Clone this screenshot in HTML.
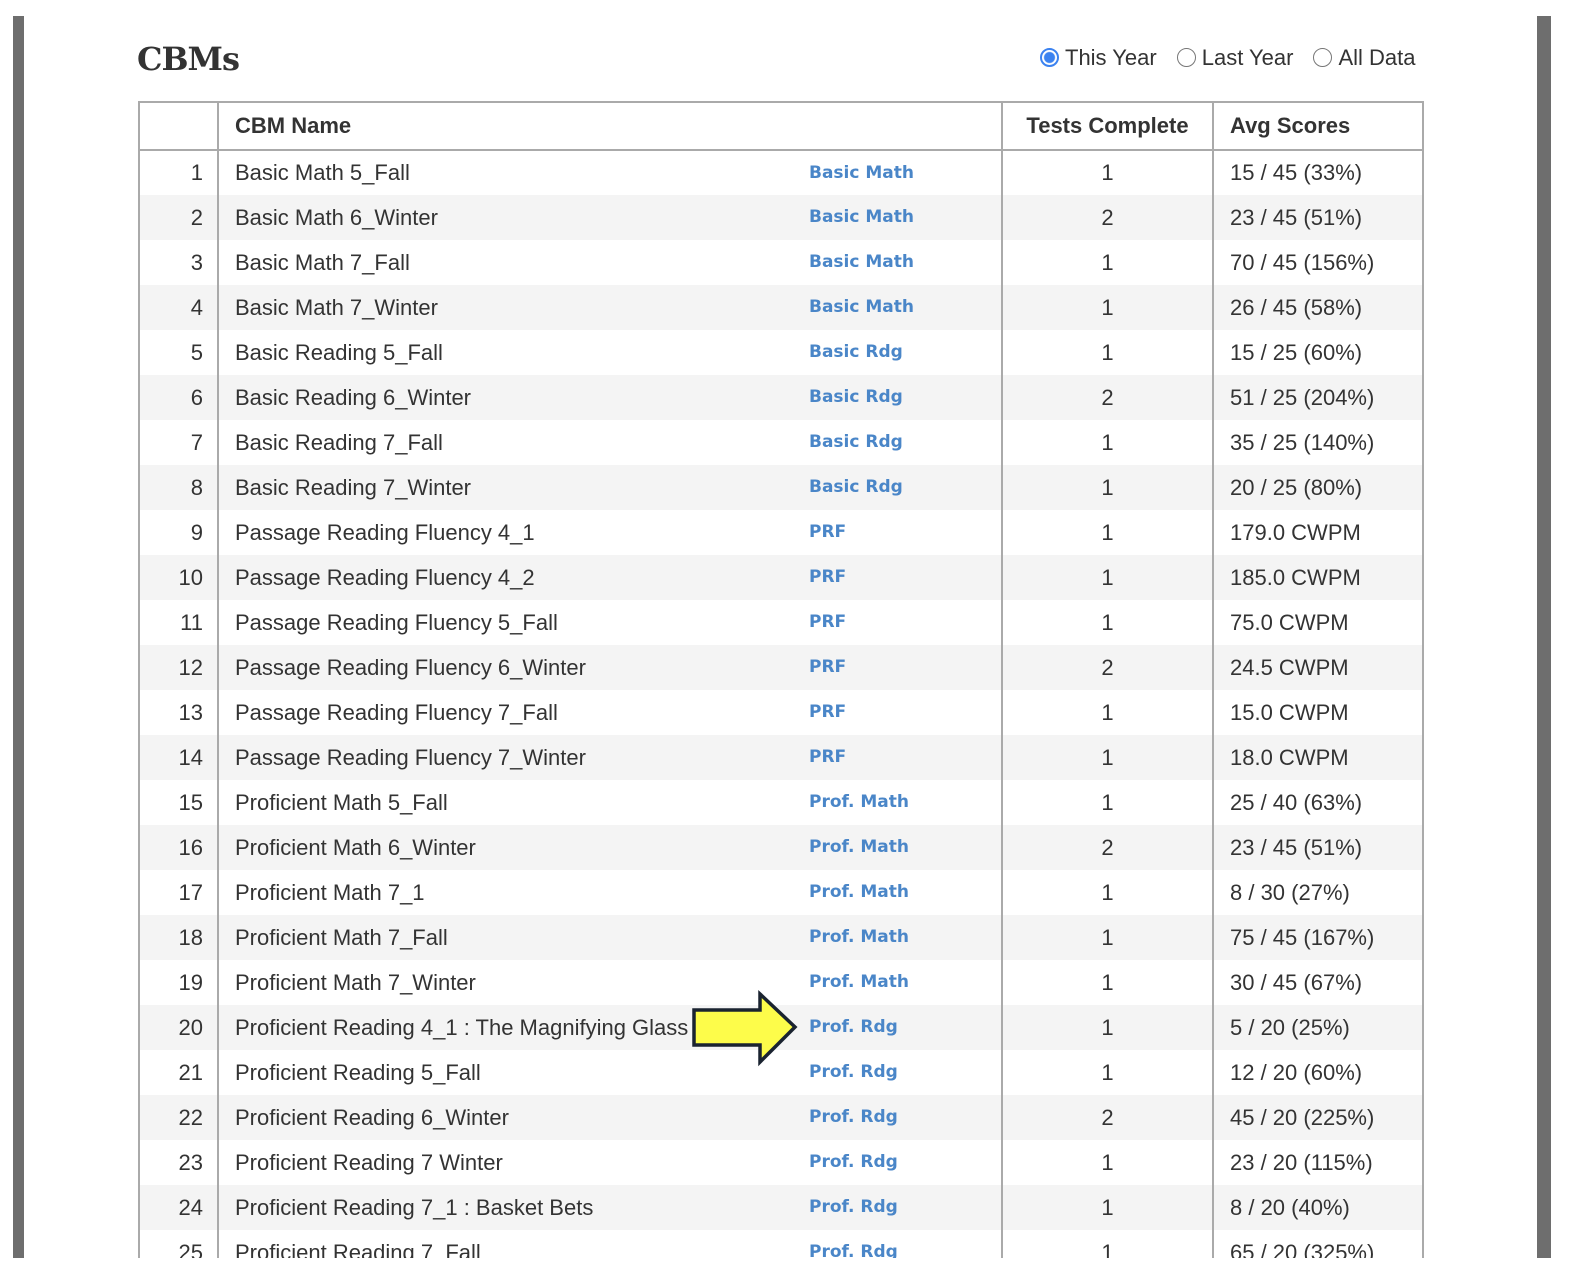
<!DOCTYPE html>
<html><head><meta charset="utf-8"><style>
*{margin:0;padding:0;box-sizing:border-box}
html,body{width:1580px;height:1288px;background:#fff;overflow:hidden}
.bar{position:absolute;top:16px;height:1242px;background:#6e6e6e}
.clip{position:absolute;left:0;top:0;width:1580px;height:1258px;overflow:hidden}
h1{position:absolute;left:137px;top:40px;font:bold 32px "DejaVu Serif","Liberation Serif",serif;color:#333;letter-spacing:-1px}
.radios{position:absolute;left:1040px;top:45px;font:22px "Liberation Sans",sans-serif;color:#333;white-space:nowrap}
.r{display:inline-block;width:19px;height:19px;border:1px solid #777;border-radius:50%;vertical-align:-2px;margin-right:6px;background:#fff}
.r.on{border:2px solid #3b82f0;background:radial-gradient(circle,#3b82f0 0 5px,#fff 6px)}
.radios span.l{margin-right:20px}
table{position:absolute;left:138px;top:101px;width:1286px;border-collapse:collapse;font:22px "Liberation Sans",sans-serif;color:#333}
th{height:48px;text-align:left;font-weight:bold;border:2px solid #aaa;padding-left:16px}
td{height:45px;border-left:2px solid #aaa;border-right:2px solid #aaa}
tr:nth-child(odd) td{background:#f4f4f4}
td.n{text-align:right;padding-right:14px;width:79px}
td.nm{padding-left:16px;width:784px;position:relative}
td.tc{text-align:center;width:211px}
td.av{padding-left:16px}
.tag{position:absolute;left:590px;top:12px;font:bold 17px "DejaVu Sans",Verdana,sans-serif;color:#4a86c8}
</style></head><body>
<div class="bar" style="left:13px;width:11px"></div>
<div class="bar" style="left:1537px;width:14px"></div>
<div class="clip">
<h1>CBMs</h1>
<div class="radios"><span class="r on"></span><span class="l">This Year</span><span class="r"></span><span class="l">Last Year</span><span class="r"></span>All Data</div>
<table>
<tr><th style="width:79px"></th><th>CBM Name</th><th style="text-align:center;padding:0">Tests Complete</th><th>Avg Scores</th></tr>
<tr><td class="n">1</td><td class="nm">Basic Math 5_Fall<span class="tag">Basic Math</span></td><td class="tc">1</td><td class="av">15 / 45 (33%)</td></tr>
<tr><td class="n">2</td><td class="nm">Basic Math 6_Winter<span class="tag">Basic Math</span></td><td class="tc">2</td><td class="av">23 / 45 (51%)</td></tr>
<tr><td class="n">3</td><td class="nm">Basic Math 7_Fall<span class="tag">Basic Math</span></td><td class="tc">1</td><td class="av">70 / 45 (156%)</td></tr>
<tr><td class="n">4</td><td class="nm">Basic Math 7_Winter<span class="tag">Basic Math</span></td><td class="tc">1</td><td class="av">26 / 45 (58%)</td></tr>
<tr><td class="n">5</td><td class="nm">Basic Reading 5_Fall<span class="tag">Basic Rdg</span></td><td class="tc">1</td><td class="av">15 / 25 (60%)</td></tr>
<tr><td class="n">6</td><td class="nm">Basic Reading 6_Winter<span class="tag">Basic Rdg</span></td><td class="tc">2</td><td class="av">51 / 25 (204%)</td></tr>
<tr><td class="n">7</td><td class="nm">Basic Reading 7_Fall<span class="tag">Basic Rdg</span></td><td class="tc">1</td><td class="av">35 / 25 (140%)</td></tr>
<tr><td class="n">8</td><td class="nm">Basic Reading 7_Winter<span class="tag">Basic Rdg</span></td><td class="tc">1</td><td class="av">20 / 25 (80%)</td></tr>
<tr><td class="n">9</td><td class="nm">Passage Reading Fluency 4_1<span class="tag">PRF</span></td><td class="tc">1</td><td class="av">179.0 CWPM</td></tr>
<tr><td class="n">10</td><td class="nm">Passage Reading Fluency 4_2<span class="tag">PRF</span></td><td class="tc">1</td><td class="av">185.0 CWPM</td></tr>
<tr><td class="n">11</td><td class="nm">Passage Reading Fluency 5_Fall<span class="tag">PRF</span></td><td class="tc">1</td><td class="av">75.0 CWPM</td></tr>
<tr><td class="n">12</td><td class="nm">Passage Reading Fluency 6_Winter<span class="tag">PRF</span></td><td class="tc">2</td><td class="av">24.5 CWPM</td></tr>
<tr><td class="n">13</td><td class="nm">Passage Reading Fluency 7_Fall<span class="tag">PRF</span></td><td class="tc">1</td><td class="av">15.0 CWPM</td></tr>
<tr><td class="n">14</td><td class="nm">Passage Reading Fluency 7_Winter<span class="tag">PRF</span></td><td class="tc">1</td><td class="av">18.0 CWPM</td></tr>
<tr><td class="n">15</td><td class="nm">Proficient Math 5_Fall<span class="tag">Prof. Math</span></td><td class="tc">1</td><td class="av">25 / 40 (63%)</td></tr>
<tr><td class="n">16</td><td class="nm">Proficient Math 6_Winter<span class="tag">Prof. Math</span></td><td class="tc">2</td><td class="av">23 / 45 (51%)</td></tr>
<tr><td class="n">17</td><td class="nm">Proficient Math 7_1<span class="tag">Prof. Math</span></td><td class="tc">1</td><td class="av">8 / 30 (27%)</td></tr>
<tr><td class="n">18</td><td class="nm">Proficient Math 7_Fall<span class="tag">Prof. Math</span></td><td class="tc">1</td><td class="av">75 / 45 (167%)</td></tr>
<tr><td class="n">19</td><td class="nm">Proficient Math 7_Winter<span class="tag">Prof. Math</span></td><td class="tc">1</td><td class="av">30 / 45 (67%)</td></tr>
<tr><td class="n">20</td><td class="nm">Proficient Reading 4_1 : The Magnifying Glass<span class="tag">Prof. Rdg</span></td><td class="tc">1</td><td class="av">5 / 20 (25%)</td></tr>
<tr><td class="n">21</td><td class="nm">Proficient Reading 5_Fall<span class="tag">Prof. Rdg</span></td><td class="tc">1</td><td class="av">12 / 20 (60%)</td></tr>
<tr><td class="n">22</td><td class="nm">Proficient Reading 6_Winter<span class="tag">Prof. Rdg</span></td><td class="tc">2</td><td class="av">45 / 20 (225%)</td></tr>
<tr><td class="n">23</td><td class="nm">Proficient Reading 7 Winter<span class="tag">Prof. Rdg</span></td><td class="tc">1</td><td class="av">23 / 20 (115%)</td></tr>
<tr><td class="n">24</td><td class="nm">Proficient Reading 7_1 : Basket Bets<span class="tag">Prof. Rdg</span></td><td class="tc">1</td><td class="av">8 / 20 (40%)</td></tr>
<tr><td class="n">25</td><td class="nm">Proficient Reading 7_Fall<span class="tag">Prof. Rdg</span></td><td class="tc">1</td><td class="av">65 / 20 (325%)</td></tr>
</table>
<svg style="position:absolute;left:0;top:0" width="1580" height="1258">
<path d="M694 1010 L760 1010 L760 994 L795 1027 L760 1062 L760 1045 L694 1045 Z" fill="#fdfc4a" stroke="#1a2330" stroke-width="3.5" stroke-linejoin="miter"/>
</svg>
</div>
</body></html>
